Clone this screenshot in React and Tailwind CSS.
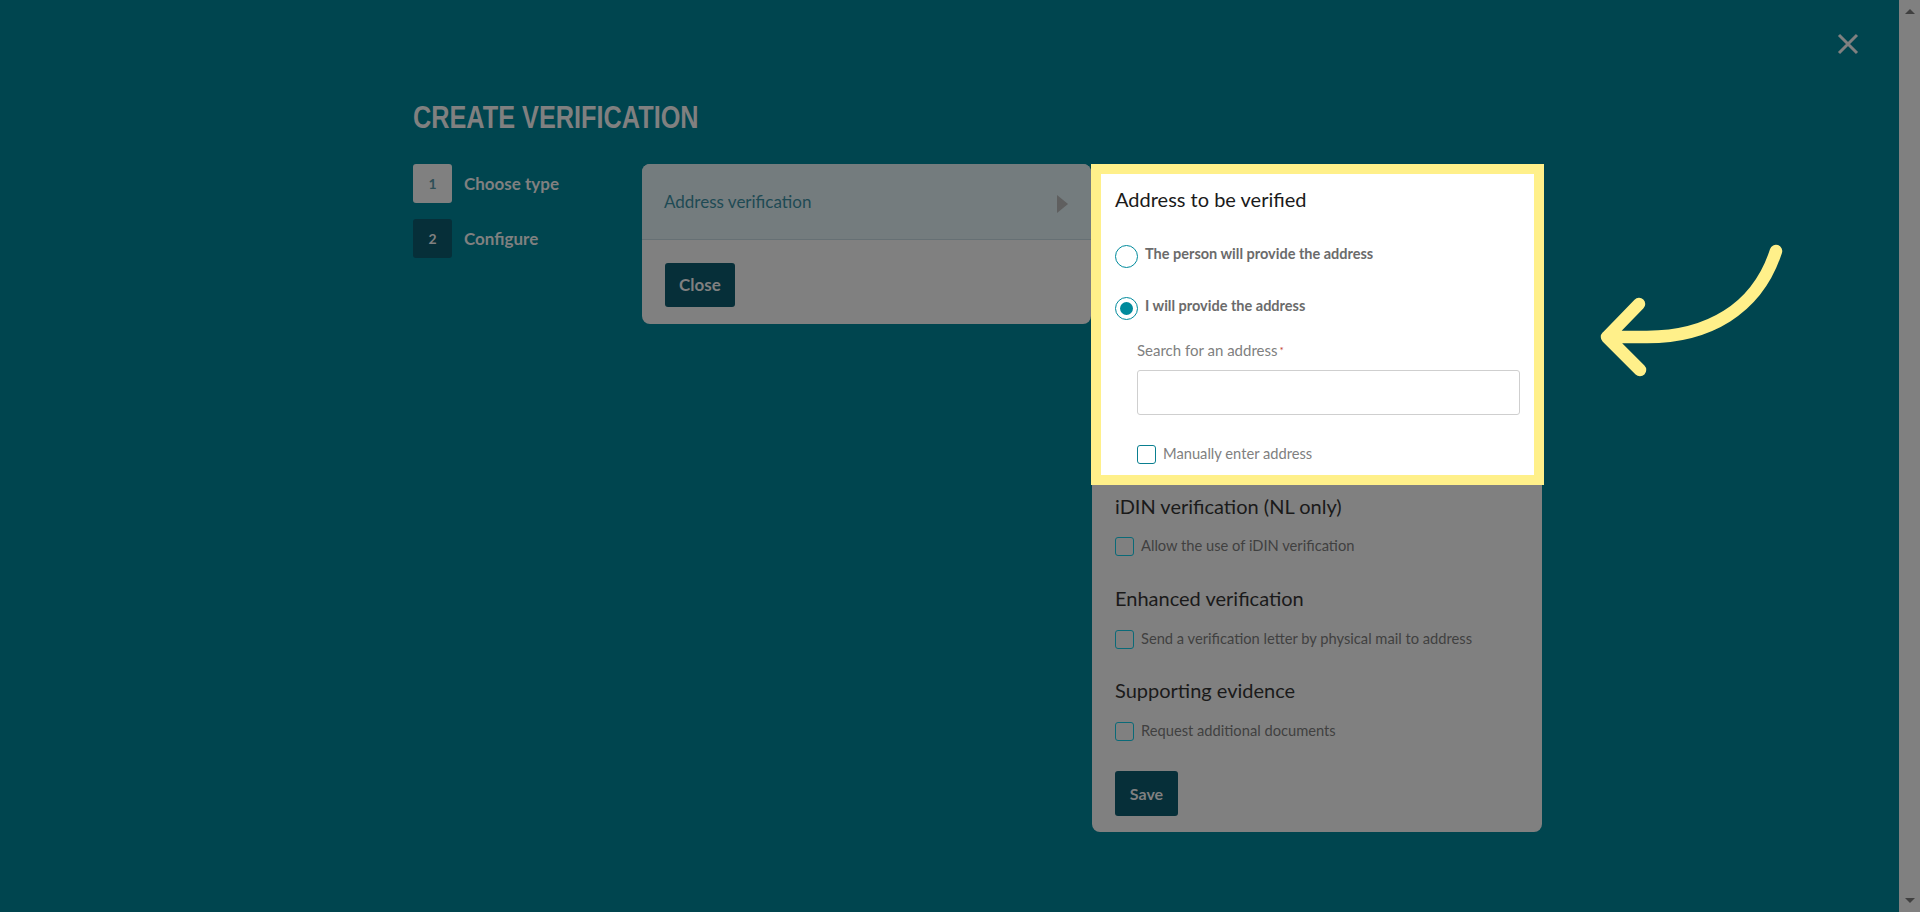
import React from 'react';

function Check({ label }) {
  return (
    <label className="flex items-start gap-[7px]">
      <span className="mt-[1px] block w-[19px] h-[19px] rounded-[3px] border border-[#0a6a78]"></span>
      <span className="text-[14.7px] leading-[18px] text-[#404040]">{label}</span>
    </label>
  );
}

function Radio({ label, checked }) {
  return (
    <label className="flex items-start gap-[7px]">
      <span className="flex items-center justify-center w-[23px] h-[23px] rounded-full border border-[#008a9c] bg-white">
        {checked && <span className="block w-[13px] h-[13px] rounded-full bg-[#008a9c]"></span>}
      </span>
      <span className="font-bold text-[14.5px] leading-[18px] text-[#6b6b6b]">{label}</span>
    </label>
  );
}

export default function App() {
  return (
    <div className="flex h-[912px] overflow-hidden bg-[#00454f] font-['Lato','Noto_Sans',sans-serif]">
      <div className="relative flex-1 pl-[413px] pt-[98px]">
        <button className="absolute top-[32px] left-[1836px] text-[#808080]">
          <svg width="24" height="24" viewBox="0 0 24 24" fill="none" stroke="currentColor" strokeWidth="3">
            <path d="M3 3 L21 21 M21 3 L3 21" />
          </svg>
        </button>

        <h1 className="h-[38px] origin-left scale-x-[0.79] font-['Liberation_Sans',sans-serif] font-bold text-[32px] leading-[38px] text-[#808080] whitespace-nowrap">
          CREATE VERIFICATION
        </h1>

        <div className="flex mt-[28px]">
          <div className="w-[229px] flex flex-col gap-4">
            <div className="flex items-center gap-3">
              <div className="flex items-center justify-center w-[39px] h-[39px] rounded-[3px] bg-[#808080] font-bold text-sm text-[#2f4f57]">1</div>
              <span className="font-bold text-[17px] text-[#808080]">Choose type</span>
            </div>
            <div className="flex items-center gap-3">
              <div className="flex items-center justify-center w-[39px] h-[39px] rounded-[3px] bg-[#062f39] font-bold text-sm text-[#808080]">2</div>
              <span className="font-bold text-[17px] text-[#808080]">Configure</span>
            </div>
          </div>

          <div className="w-[449px] h-[160px] rounded-lg bg-[#808080] overflow-hidden">
            <div className="flex items-center justify-between h-[76px] pl-[22px] pr-[23px] bg-[#747c7e] border-b border-[#667074]">
              <span className="text-[17px] text-[#1e4a54]">Address verification</span>
              <span className="mt-[4px] w-0 h-0 border-y-[9px] border-y-transparent border-l-[11px] border-l-[#5f5f5f]"></span>
            </div>
            <div className="pl-[23px] pt-[23px]">
              <button className="w-[70px] h-[44px] rounded-[3px] bg-[#062f39] font-bold text-[17px] text-[#808080]">Close</button>
            </div>
          </div>

          <div className="w-[453px]">
            <div className="h-[321px] border-[10px] border-[#fff08a] bg-white px-[14px] pt-[12px]">
              <h2 className="text-[20px] leading-[26px] text-[#1a1a1a]">Address to be verified</h2>
              <div className="mt-[33px] flex flex-col gap-[29px]">
                <Radio label="The person will provide the address" />
                <Radio label="I will provide the address" checked />
              </div>
              <div className="ml-[22px] mt-[20px]">
                <div className="text-[15px] leading-[20px] text-[#808080]">
                  Search for an address<span className="ml-[2px] align-top text-[10px] text-[#c0392b]">*</span>
                </div>
                <input className="block mt-[10px] w-[383px] h-[45px] rounded-[3px] border border-[#cfcfcf] bg-white" />
                <div className="mt-[30px] flex items-start gap-[7px]">
                  <span className="block w-[19px] h-[19px] rounded-[3px] border border-[#0a7f90]"></span>
                  <span className="text-[14.7px] leading-[16px] text-[#808080]">Manually enter address</span>
                </div>
              </div>
            </div>

            <div className="ml-[1px] w-[450px] h-[347px] rounded-b-lg bg-[#808080] pl-[23px] pt-[8px]">
              <h2 className="text-[20px] leading-[26px] text-[#1a1a1a]">iDIN verification (NL only)</h2>
              <div className="mt-[17px]"><Check label="Allow the use of iDIN verification" /></div>
              <h2 className="mt-[29px] text-[20px] leading-[26px] text-[#1a1a1a]">Enhanced verification</h2>
              <div className="mt-[18px]"><Check label="Send a verification letter by physical mail to address" /></div>
              <h2 className="mt-[28px] text-[20px] leading-[26px] text-[#1a1a1a]">Supporting evidence</h2>
              <div className="mt-[18px]"><Check label="Request additional documents" /></div>
              <button className="block mt-[30px] w-[63px] h-[45px] rounded-[3px] bg-[#062f39] font-bold text-[16px] text-[#808080]">Save</button>
            </div>
          </div>
        </div>

        <svg className="absolute left-[1590px] top-[235px]" width="200" height="150" viewBox="1590 235 200 150" fill="none" stroke="#fff08a" strokeWidth="12.5" strokeLinecap="round" strokeLinejoin="round">
          <path d="M1776 251 C1757 310 1707 337 1647 337 L1607 337 M1639 304 L1607 337 L1640 370" />
        </svg>
      </div>

      <div className="flex flex-col justify-between items-center w-[21px] bg-[#808080] py-[9px]">
        <span className="w-0 h-0 border-x-[5px] border-x-transparent border-b-[5px] border-b-[#404040]"></span>
        <span className="w-0 h-0 border-x-[5px] border-x-transparent border-t-[5px] border-t-[#404040]"></span>
      </div>
    </div>
  );
}
